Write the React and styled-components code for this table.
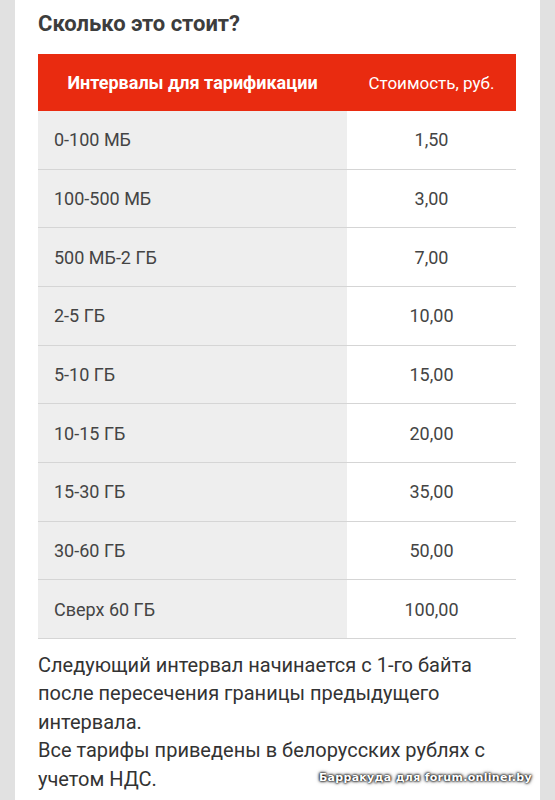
import styled, { createGlobalStyle } from 'styled-components';

const GlobalStyle = createGlobalStyle`
    html, body {
        margin: 0;
        padding: 0;
        background: #e1e1e1;
    }
    body {
        font-family: Roboto, "Noto Sans", sans-serif;
    }
`;

const Page = styled.main`
    position: relative;
    box-sizing: border-box;
    width: 525px;
    min-height: 800px;
    margin-left: 15px;
    padding: 9px 24px 0 23px;
    background: #fff;
`;

const Title = styled.h2`
    margin: 0 0 15px;
    font-size: 22px;
    font-weight: 700;
    line-height: 30px;
    color: #3d3d3d;
`;

const Table = styled.div`
    display: grid;
    grid-template-columns: 309px 169px;
    width: 478px;
`;

const HeadCell = styled.div`
    display: flex;
    align-items: center;
    justify-content: center;
    height: 57px;
    background: #e92b10;
    color: #fff;
    font-size: ${props => (props.bold ? 18 : 17)}px;
    font-weight: ${props => (props.bold ? 700 : 400)};
`;

const Cell = styled.div`
    box-sizing: border-box;
    display: flex;
    align-items: center;
    justify-content: ${props => (props.price ? 'center' : 'flex-start')};
    height: 58.67px;
    padding-left: ${props => (props.price ? 0 : 16)}px;
    border-bottom: 1px solid #d5d5d5;
    background: ${props => (props.price ? '#fff' : '#eeeeee')};
    color: #444;
    font-size: 18px;
`;

const Note = styled.p`
    margin: 12px 0 0;
    font-size: 20px;
    line-height: 28.5px;
    color: #333;
`;

const Watermark = styled.div`
    position: absolute;
    right: 8px;
    top: 771px;
    font-family: "DejaVu Sans", Verdana, sans-serif;
    font-size: 11px;
    font-weight: 700;
    letter-spacing: 0.3px;
    color: #fff;
    text-shadow: 0 0 3px #000, 0 0 2px #000, 0 0 4px rgba(0, 0, 0, 0.6);
`;

const RATES = [
    ['0-100 МБ', '1,50'],
    ['100-500 МБ', '3,00'],
    ['500 МБ-2 ГБ', '7,00'],
    ['2-5 ГБ', '10,00'],
    ['5-10 ГБ', '15,00'],
    ['10-15 ГБ', '20,00'],
    ['15-30 ГБ', '35,00'],
    ['30-60 ГБ', '50,00'],
    ['Сверх 60 ГБ', '100,00'],
];

const App = () => {
    return (
        <>
            <GlobalStyle />
            <Page>
                <Title>Сколько это стоит?</Title>
                <Table>
                    <HeadCell bold>Интервалы для тарификации</HeadCell>
                    <HeadCell>Стоимость, руб.</HeadCell>
                    {RATES.map(([range, price]) => [
                        <Cell key={range}>{range}</Cell>,
                        <Cell key={range + '-p'} price>
                            {price}
                        </Cell>,
                    ])}
                </Table>
                <Note>
                    Следующий интервал начинается с 1-го байта после пересечения границы
                    предыдущего интервала.
                    <br />
                    Все тарифы приведены в белорусских рублях с учетом НДС.
                </Note>
                <Watermark>Барракуда для forum.onliner.by</Watermark>
            </Page>
        </>
    );
};

export default App;
